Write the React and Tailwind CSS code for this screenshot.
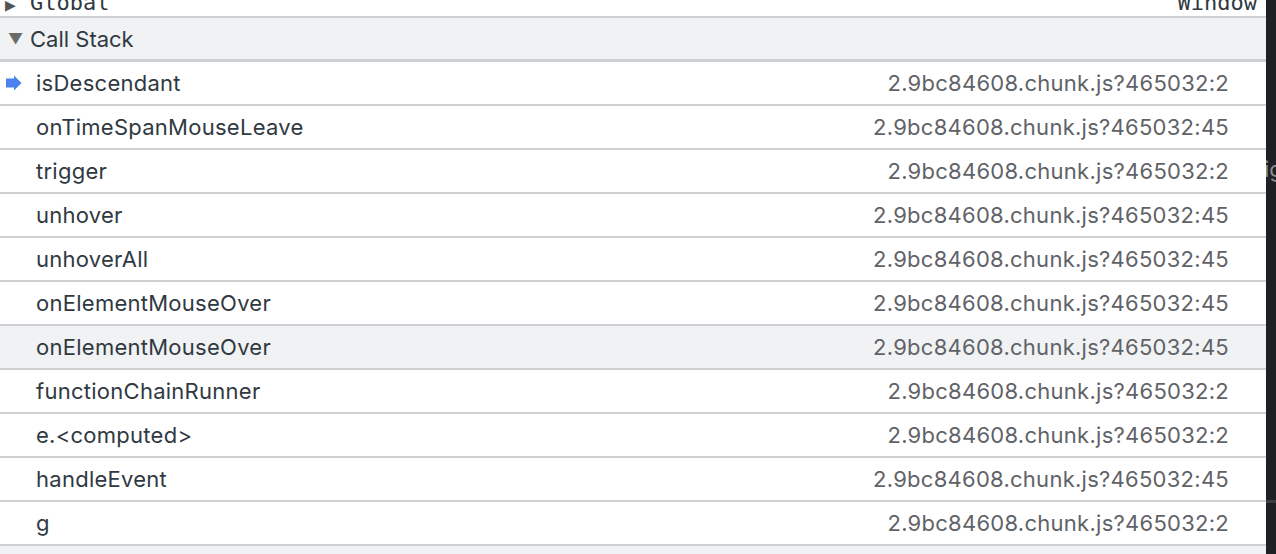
import React from "react";

const frames = [
  { name: "isDescendant", loc: "2.9bc84608.chunk.js?465032:2", current: true },
  { name: "onTimeSpanMouseLeave", loc: "2.9bc84608.chunk.js?465032:45" },
  { name: "trigger", loc: "2.9bc84608.chunk.js?465032:2" },
  { name: "unhover", loc: "2.9bc84608.chunk.js?465032:45" },
  { name: "unhoverAll", loc: "2.9bc84608.chunk.js?465032:45" },
  { name: "onElementMouseOver", loc: "2.9bc84608.chunk.js?465032:45" },
  { name: "onElementMouseOver", loc: "2.9bc84608.chunk.js?465032:45", hover: true },
  { name: "functionChainRunner", loc: "2.9bc84608.chunk.js?465032:2" },
  { name: "e.<computed>", loc: "2.9bc84608.chunk.js?465032:2" },
  { name: "handleEvent", loc: "2.9bc84608.chunk.js?465032:45" },
  { name: "g", loc: "2.9bc84608.chunk.js?465032:2" },
];

function CurrentArrow() {
  return (
    <svg width="16" height="16" viewBox="0 0 16 16" className="shrink-0">
      <path d="M0 3.5H8V0.5L15.5 8L8 15.5V12.5H0Z" fill="#4b82f0" />
    </svg>
  );
}

function FrameRow({ frame }) {
  return (
    <div
      className={`flex items-center h-[44px] border-b-2 border-[#cdcfd3] tracking-[0.012em] ${
        frame.hover ? "bg-[#f1f2f4]" : "bg-white"
      }`}
    >
      <div className="w-[36px] pl-[6px] flex items-center">
        {frame.current && <CurrentArrow />}
      </div>
      <div className="flex-1 text-[#303942]">{frame.name}</div>
      <div className="pr-[37px] text-[#5f6368]">{frame.loc}</div>
    </div>
  );
}

export default function App() {
  return (
    <div
      className="w-[1276px] h-[554px] flex overflow-hidden text-[22px] leading-none"
      style={{ fontFamily: "Inter, 'Liberation Sans', sans-serif" }}
    >
      <div className="w-[1266px] shrink-0 bg-[#f1f2f4] flex flex-col">
        {/* scope row, cut off at the top */}
        <div className="h-[18px] bg-white border-b-2 border-[#cdcfd3] relative overflow-hidden shrink-0">
          <div
            className="absolute left-0 right-0 bottom-[2px] flex items-end text-[#303942]"
            style={{ fontFamily: "'DejaVu Sans Mono', monospace" }}
          >
            <span className="pl-[5px] w-[30px] text-[18px] text-[#555]">▶</span>
            <span className="flex-1">Global</span>
            <span className="pr-[9px]">Window</span>
          </div>
        </div>

        {/* Call Stack header */}
        <div className="h-[44px] shrink-0 flex items-center bg-[#f1f2f4] border-b-[3px] border-[#cdcfd3] text-[#303942]">
          <span className="w-[30px] pl-[8px] text-[15px] text-[#6a6a6a]">▼</span>
          <span>Call Stack</span>
        </div>

        <div className="flex flex-col">
          {frames.map((f, i) => (
            <FrameRow key={i} frame={f} />
          ))}
        </div>
      </div>

      <div className="flex-1 min-w-0 bg-[#1f2023] flex flex-col overflow-hidden">
        <div className="h-[158px] shrink-0" />
        <div className="text-[#8a8d92] text-[22px] -ml-[2px] whitespace-nowrap">ig</div>
        <div className="h-[320px] shrink-0" />
        <div className="h-[3px] shrink-0 bg-[#3b3d41]" />
      </div>
    </div>
  );
}
